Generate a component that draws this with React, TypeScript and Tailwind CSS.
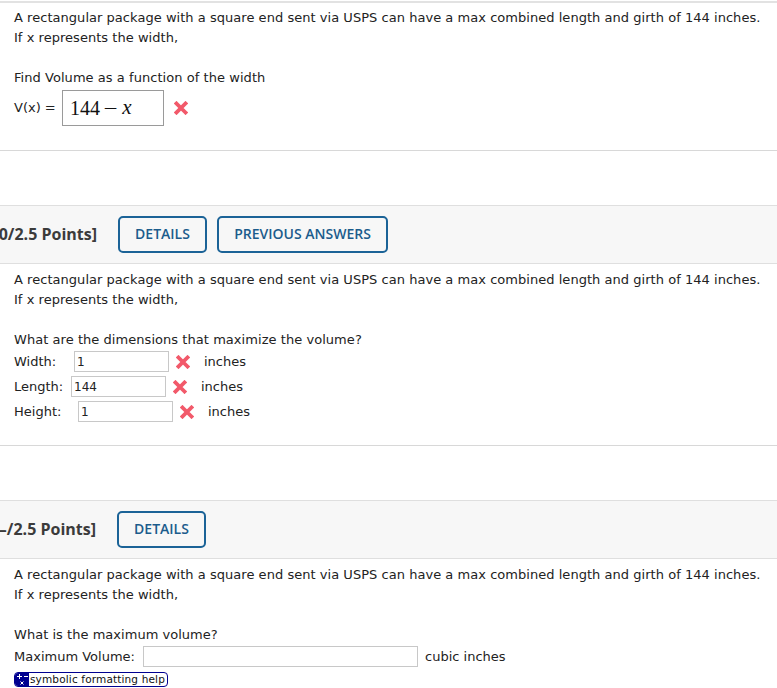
const BODY_FONT = "font-['DejaVu_Sans','Verdana',sans-serif]";

function RedX() {
  return (
    <svg width="14" height="14" viewBox="0 0 14 14" className="shrink-0">
      <path d="M2.5 2.5 L11.5 11.5 M11.5 2.5 L2.5 11.5" stroke="#f2596a" strokeWidth="3.8" strokeLinecap="square" />
    </svg>
  );
}

function Prompt() {
  return (
    <div className="h-[40px] leading-[20px] whitespace-nowrap tracking-[0.036px]">
      <p>A rectangular package with a square end sent via USPS can have a max combined length and girth of 144 inches.</p>
      <p>If x represents the width,</p>
    </div>
  );
}

function Header({ points, labelClass, prev }: { points: string; labelClass: string; prev?: boolean }) {
  return (
    <div className="h-[59px] bg-[#f7f7f7] border-y border-[#dfdfdf] flex items-center overflow-hidden">
      <span className={`${labelClass} shrink-0 flex justify-end pr-[21px] pb-[2px] font-['Open_Sans',sans-serif] font-bold text-[16px] text-[#3b3b3b] whitespace-nowrap`}>
        {points}
      </span>
      <button className="h-[37px] w-[89px] pb-[2px] border-2 border-[#1b6397] rounded-[5px] font-['Open_Sans',sans-serif] font-semibold text-[14px] text-[#1b5c8c]">
        DETAILS
      </button>
      {prev && (
        <button className="h-[37px] w-[171px] ml-[10px] pb-[2px] border-2 border-[#1b6397] rounded-[5px] font-['Open_Sans',sans-serif] font-semibold text-[14px] text-[#1b5c8c]">
          PREVIOUS ANSWERS
        </button>
      )}
    </div>
  );
}

function DimRow({ label, value, labelClass }: { label: string; value: string; labelClass: string }) {
  return (
    <div className="flex items-center h-[25px] pl-[14px]">
      <span className={labelClass}>{label}</span>
      <div className="w-[95px] h-[21px] border border-[#c8c8c8] bg-white flex items-center pl-[2px] text-[12px] text-[#222]">
        {value}
      </div>
      <span className="ml-[7px]"><RedX /></span>
      <span className="ml-[14px]">inches</span>
    </div>
  );
}

export default function App() {
  return (
    <div className={`${BODY_FONT} w-[777px] h-[688px] overflow-hidden bg-white text-[13px] text-[#222]`}>
      <div className="mt-[1px] border-t-2 border-[#e2e2e2] pt-[5px] px-[14px] h-[149px]">
        <Prompt />
        <p className="mt-[20px] leading-[20px] tracking-[0.05px]">Find Volume as a function of the width</p>
        <div className="flex items-center mt-[2px]">
          <span className="w-[48px]">V(x) =</span>
          <div className="w-[102px] h-[36px] border border-[#9a9a9a] flex items-center pl-[7px] font-['Liberation_Serif',serif] text-[20px] text-[#111]">
            144<span className="mx-[5px] scale-x-125">−</span><i className="ml-[1px] text-[21px]">x</i>
          </div>
          <span className="ml-[10px]"><RedX /></span>
        </div>
      </div>
      <div className="border-t border-[#d8d8d8] h-[55px]" />
      <Header points="0/2.5 Points]" labelClass="w-[118px]" prev />
      <div className="h-[182px] border-b border-[#d8d8d8] pt-[6px]">
        <div className="px-[14px]">
          <Prompt />
          <p className="mt-[20px] leading-[20px] tracking-[0.05px]">What are the dimensions that maximize the volume?</p>
        </div>
        <div className="-mt-[1px]">
          <DimRow label="Width:" value="1" labelClass="w-[60px]" />
          <DimRow label="Length:" value="144" labelClass="w-[57px]" />
          <DimRow label="Height:" value="1" labelClass="w-[64px]" />
        </div>
      </div>
      <div className="h-[54px]" />
      <Header points="–/2.5 Points]" labelClass="w-[117px]" />
      <div className="pt-[6px] px-[14px]">
        <Prompt />
        <p className="mt-[20px] leading-[20px] tracking-[0.03px]">What is the maximum volume?</p>
        <div className="flex items-center h-[23px]">
          <span className="w-[129px]">Maximum Volume:</span>
          <div className="w-[275px] h-[21px] border border-[#c8c8c8] bg-white" />
          <span className="ml-[7px]">cubic inches</span>
        </div>
        <div className="mt-[4px] flex items-center w-[154px] h-[15px] border border-[#000090] rounded-[4px] overflow-hidden">
          <svg width="14" height="13" viewBox="0 0 14 13" className="shrink-0 bg-[#000090]">
            <path d="M2 3.5 H7 M4.5 1 V6 M9 3.5 H13 M5.5 8.5 L8.5 11.5 M8.5 8.5 L5.5 11.5" stroke="#fff" strokeWidth="1" fill="none" />
          </svg>
          <span className="pl-[1px] text-[10.5px] tracking-[0.15px] text-[#111] whitespace-nowrap">symbolic formatting help</span>
        </div>
      </div>
    </div>
  );
}
